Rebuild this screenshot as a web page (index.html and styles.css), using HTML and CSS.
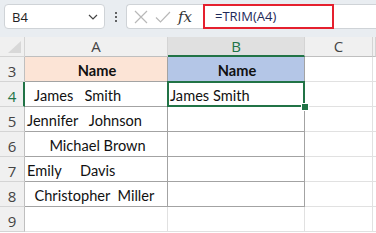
FILE: index.html
```html
<!DOCTYPE html>
<html>
<head>
<meta charset="utf-8">
<link rel="stylesheet" href="styles.css">
</head>
<body>
<div class="toolbar">
  <div class="namebox">
    <span class="nb-text">B4</span>
    <svg class="chev" width="10" height="6" viewBox="0 0 10 6"><path d="M1 1 L5 5 L9 1" fill="none" stroke="#444" stroke-width="1.2"/></svg>
  </div>
  <div class="dots"><span></span><span></span><span></span></div>
  <div class="fxbox">
    <svg width="16" height="16" viewBox="0 0 16 16"><path d="M2 2 L14 14 M14 2 L2 14" stroke="#b8b8b8" stroke-width="1.2" fill="none"/></svg>
    <svg width="16" height="16" viewBox="0 0 16 16"><path d="M1 8.5 L5.5 13 L15 3" stroke="#b8b8b8" stroke-width="1.2" fill="none"/></svg>
    <span class="fx">fx</span>
  </div>
  <div class="formula">
    <div class="formula-hl">=TRIM(A4)</div>
  </div>
</div>
<div class="sheet">
  <div class="corner"><span class="tri"></span></div>
  <div class="colh">A</div>
  <div class="colh sel">B</div>
  <div class="colh">C</div>
  <div class="colh last"></div>

  <div class="rowh">3</div>
  <div class="cell tb hdr-a">Name</div>
  <div class="cell tb hdr-b">Name</div>
  <div class="cell"></div>
  <div class="cell last"></div>

  <div class="rowh sel">4</div>
  <div class="cell tb">  James   Smith</div>
  <div class="cell tb active">James Smith</div>
  <div class="cell"></div>
  <div class="cell last"></div>

  <div class="rowh">5</div>
  <div class="cell tb">Jennifer   Johnson</div>
  <div class="cell tb"></div>
  <div class="cell"></div>
  <div class="cell last"></div>

  <div class="rowh">6</div>
  <div class="cell tb">      Michael Brown</div>
  <div class="cell tb"></div>
  <div class="cell"></div>
  <div class="cell last"></div>

  <div class="rowh">7</div>
  <div class="cell tb">Emily     Davis</div>
  <div class="cell tb"></div>
  <div class="cell"></div>
  <div class="cell last"></div>

  <div class="rowh">8</div>
  <div class="cell tb">  Christopher  Miller</div>
  <div class="cell tb"></div>
  <div class="cell"></div>
  <div class="cell last"></div>

  <div class="rowh">9</div>
  <div class="cell"></div>
  <div class="cell"></div>
  <div class="cell"></div>
  <div class="cell last"></div>
</div>
</body>
</html>
```
FILE: styles.css
```css
* { box-sizing: border-box; }
html, body { margin: 0; padding: 0; }
body {
  width: 376px;
  height: 233px;
  overflow: hidden;
  background: #ffffff;
  font-family: "Open Sans", "Noto Sans", sans-serif;
}
.toolbar {
  height: 37px;
  background: #e9edf1;
  display: flex;
  align-items: flex-start;
  padding-top: 4px;
  padding-left: 4px;
}
.namebox {
  width: 101px;
  height: 25px;
  background: #fff;
  border: 1px solid #cfd3d7;
  border-radius: 4px;
  display: flex;
  align-items: center;
  justify-content: space-between;
  padding: 0 6px 0 7px;
}
.nb-text { font-size: 13px; color: #222; }
.dots {
  width: 21px;
  height: 25px;
  display: flex;
  flex-direction: column;
  align-items: center;
  justify-content: center;
  gap: 2px;
}
.dots span { width: 2px; height: 2px; background: #333; border-radius: 1px; }
.fxbox {
  width: 76px;
  height: 25px;
  background: #fff;
  border: 1px solid #cfd3d7;
  border-radius: 4px 0 0 4px;
  border-right: none;
  display: flex;
  align-items: center;
  padding-left: 6px;
  gap: 6px;
}
.fx {
  font-family: "DejaVu Serif", "Liberation Serif", serif;
  font-style: italic;
  font-size: 15px;
  color: #333;
  margin-left: 1px;
}
.formula {
  flex: 1;
  height: 25px;
  background: #fff;
  border-top: 1px solid #cfd3d7;
  border-bottom: 1px solid #cfd3d7;
  padding-left: 1px;
}
.formula-hl {
  width: 131px;
  height: 25px;
  margin-top: -1px;
  border: 2px solid #e5202e;
  font-size: 13px;
  color: #1e2a5a;
  padding-left: 10px;
  line-height: 21px;
}
.sheet {
  display: grid;
  grid-template-columns: 25px 143px 137px 68px 3px;
  grid-template-rows: 20px repeat(7, 25px);
  font-family: "Lato", "Open Sans", sans-serif;
}
.corner {
  background: #f0f0f0;
  border-right: 1px solid #d4d4d4;
  border-bottom: 1px solid #d4d4d4;
  position: relative;
}
.tri {
  position: absolute;
  right: 3px;
  bottom: 3px;
  width: 0;
  height: 0;
  border-left: 13px solid transparent;
  border-bottom: 12px solid #d8d8d8;
}
.colh {
  background: #f0f0f0;
  border-right: 1px solid #d4d4d4;
  border-bottom: 1px solid #bfbfbf;
  text-align: center;
  font-size: 15px;
  color: #444;
  line-height: 19px;
  font-family: "Open Sans", sans-serif;
}
.colh.sel {
  background: #e0e0e0;
  color: #217346;
  border-bottom: 2px solid #217346;
}
.rowh {
  background: #f0f0f0;
  border-right: 1px solid #bfbfbf;
  border-bottom: 1px solid #d4d4d4;
  text-align: center;
  font-size: 15px;
  color: #444;
  line-height: 24px;
  padding-top: 2px;
  font-family: "Open Sans", sans-serif;
}
.rowh.sel {
  color: #217346;
  border-right: 2px solid #217346;
  padding-left: 1px;
}
.cell {
  border-right: 1px solid #e1e1e1;
  border-bottom: 1px solid #e1e1e1;
  font-size: 14.6px;
  color: #111;
  white-space: pre;
  padding-left: 2px;
  line-height: 24px;
  padding-top: 2px;
  overflow: visible;
}
.cell.last { border-right: none; }
.cell.tb {
  border-right: 1px solid #a3a3a3;
  border-bottom: 1px solid #a3a3a3;
}
.hdr-a { background: #fce4d6; font-weight: bold; text-align: center; }
.hdr-b { background: #b4c6e7; font-weight: bold; text-align: center; }
.active { position: relative; }
.active::before {
  content: "";
  position: absolute;
  left: -1px;
  top: -1px;
  right: -1px;
  bottom: -1px;
  border: 2px solid #217346;
}
.active::after {
  content: "";
  position: absolute;
  right: -4px;
  bottom: -4px;
  width: 6px;
  height: 6px;
  background: #217346;
  outline: 1px solid #fff;
}
```
